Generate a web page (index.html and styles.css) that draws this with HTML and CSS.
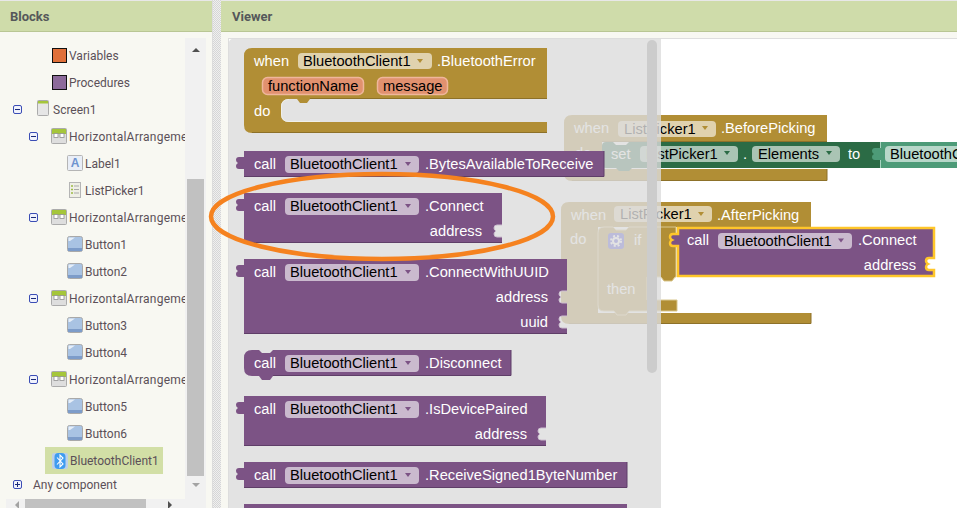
FILE: index.html
```html
<!DOCTYPE html>
<html lang="en">
<head>
    <meta charset="UTF-8">
    <title>Blocks Viewer</title>
    <link rel="stylesheet" href="styles.css">
</head>
<body>
    <svg class="icon-defs" width="0" height="0">
        <symbol id="ic-screen" viewBox="0 0 12 16">
            <rect x=".5" y=".5" width="11" height="15" rx="1" fill="#e6e6e6" stroke="#ababab"/>
            <rect x="1" y="1" width="10" height="2.5" fill="#a5c63b"/>
        </symbol>
        <symbol id="ic-arrangement" viewBox="0 0 16 16">
            <rect x=".5" y=".5" width="15" height="15" rx="1" fill="#dedede" stroke="#ababab"/>
            <rect x="1" y="1" width="14" height="5" fill="#a5c63b"/>
            <rect x="3" y="5.5" width="4" height="4" fill="#fff" stroke="#8f8f8f" stroke-width=".8"/>
            <rect x="9" y="5.5" width="4" height="4" fill="#fff" stroke="#8f8f8f" stroke-width=".8"/>
        </symbol>
        <symbol id="ic-button" viewBox="0 0 16 16">
            <rect x=".5" y=".5" width="15" height="15" rx="2" fill="#a9c3e3" stroke="#a9a9a9"/>
            <rect x="1" y="12" width="14" height="3" fill="#7d9cc9"/>
            <path d="M1.5 1.5H8L3 5H1.5Z" fill="#e6eef8"/>
        </symbol>
    </svg>

    <div class="page">
        <section class="blocks-panel">
            <h2 class="panel-title">Blocks</h2>
            <div class="tree-wrap">
                <ul class="tree">
                    <li class="row lvl-2"><span class="swatch swatch-var"></span><span class="label">Variables</span></li>
                    <li class="row lvl-2"><span class="swatch swatch-proc"></span><span class="label">Procedures</span></li>
                    <li class="row lvl-0"><span class="toggle minus"></span><svg class="ic-screen"><use href="#ic-screen"/></svg><span class="label">Screen1</span></li>
                    <li class="row lvl-1 row-wide"><span class="toggle minus"></span><svg class="ic"><use href="#ic-arrangement"/></svg><span class="label">HorizontalArrangement1</span></li>
                    <li class="row lvl-3">
                        <svg class="ic" viewBox="0 0 16 16"><rect x=".5" y=".5" width="15" height="15" rx="1" fill="#e9eef7" stroke="#b5b5b5"/><text class="ic-a" x="8" y="12" text-anchor="middle">A</text></svg>
                        <span class="label">Label1</span>
                    </li>
                    <li class="row lvl-3">
                        <svg class="ic" viewBox="0 0 16 16"><rect x="2.5" y=".5" width="11" height="15" fill="#efefe6" stroke="#b5b5b5"/><path d="M4 4h2M4 7.5h2M4 11h2" stroke="#9dbb45" stroke-width="1.5"/><path d="M7 4h5M7 7.5h5M7 11h5" stroke="#a9a9a9"/></svg>
                        <span class="label">ListPicker1</span>
                    </li>
                    <li class="row lvl-1 row-wide"><span class="toggle minus"></span><svg class="ic"><use href="#ic-arrangement"/></svg><span class="label">HorizontalArrangement2</span></li>
                    <li class="row lvl-3"><svg class="ic"><use href="#ic-button"/></svg><span class="label">Button1</span></li>
                    <li class="row lvl-3"><svg class="ic"><use href="#ic-button"/></svg><span class="label">Button2</span></li>
                    <li class="row lvl-1 row-wide"><span class="toggle minus"></span><svg class="ic"><use href="#ic-arrangement"/></svg><span class="label">HorizontalArrangement3</span></li>
                    <li class="row lvl-3"><svg class="ic"><use href="#ic-button"/></svg><span class="label">Button3</span></li>
                    <li class="row lvl-3"><svg class="ic"><use href="#ic-button"/></svg><span class="label">Button4</span></li>
                    <li class="row lvl-1 row-wide"><span class="toggle minus"></span><svg class="ic"><use href="#ic-arrangement"/></svg><span class="label">HorizontalArrangement4</span></li>
                    <li class="row lvl-3"><svg class="ic"><use href="#ic-button"/></svg><span class="label">Button5</span></li>
                    <li class="row lvl-3"><svg class="ic"><use href="#ic-button"/></svg><span class="label">Button6</span></li>
                    <li class="row lvl-2 selected">
                        <svg class="ic" viewBox="0 0 16 16"><rect width="16" height="16" rx="2" fill="#bcd0ea"/><rect x="2.5" y="0" width="11" height="16" rx="4" fill="#3f9cf0"/><path d="M5 4.5l6 6.5-3 3V2l3 3-6 6.5" fill="none" stroke="#fff" stroke-width="1.1"/></svg>
                        <span class="label">BluetoothClient1</span>
                    </li>
                    <li class="row lvl-0 row-any"><span class="toggle plus"></span><span class="label">Any component</span></li>
                </ul>
                <div class="vscroll">
                    <div class="vscroll-top"><span class="arrow-up"></span></div>
                    <div class="vscroll-thumb"></div>
                    <div class="vscroll-bottom"><span class="arrow-down"></span></div>
                </div>
                <div class="hscroll"><span class="arrow-left"></span><div class="hscroll-thumb"></div><span class="arrow-right"></span></div>
            </div>
        </section>

        <div class="splitter"></div>

        <section class="viewer-panel">
            <h2 class="panel-title">Viewer</h2>
            <svg class="workspace" viewBox="221 32 736 476">
                <rect class="canvas" x="228.5" y="38.5" width="740" height="480"/>

                <!-- blocks in the workspace, the flyout lies over their left part -->
                <path class="gold" d="M564 123Q564 115 572 115H827V142H602V169H827V181H572Q564 181 564 173Z"/>
                <path class="gold-low" d="M572 180.5H827V169M827 141.5H602"/>
                <text class="tx" x="574" y="133">when</text>
                <rect class="field" x="618" y="121" width="98" height="16" rx="4"/>
                <text class="tx-field" x="624" y="134">ListPicker1</text>
                <path class="arrow-gold" d="M702 126h6l-3 4z"/>
                <text class="tx" x="721" y="133">.BeforePicking</text>
                <text class="tx" x="575" y="158">do</text>

                <path class="green" d="M602 146Q602 142 606 142H613l3 3h10l3-3H880V168H632l-3 3h-10l-3-3H606Q602 168 602 164Z"/>
                <text class="tx" x="611" y="159">set</text>
                <rect class="field" x="640" y="146" width="98" height="16" rx="4"/>
                <text class="tx-field" x="646" y="159">ListPicker1</text>
                <path class="arrow-green" d="M724 151h6l-3 4z"/>
                <text class="tx" x="743" y="159">.</text>
                <rect class="field" x="752" y="146" width="88" height="16" rx="4"/>
                <text class="tx-field" x="758" y="159">Elements</text>
                <path class="arrow-green" d="M826 151h6l-3 4z"/>
                <text class="tx" x="848" y="159">to</text>
                <path class="green-light" d="M880 142H970V168H880V160h-5q-3 0-3-3q0-2 2-3q-2-1-2-3q0-3 3-3h5Z"/>
                <path class="green-edge" d="M880.5 142V148M880.5 160V168"/>
                <rect class="field" x="885" y="146" width="120" height="16" rx="4"/>
                <text class="tx-field" x="890" y="159">BluetoothClient1</text>

                <path class="gold" d="M561 210Q561 202 569 202H811V227H598V313H811V324H569Q561 324 561 316Z"/>
                <path class="gold-low" d="M569 323.5H811V313"/>
                <text class="tx" x="571" y="220">when</text>
                <rect class="field" x="614" y="206" width="98" height="16" rx="4"/>
                <text class="tx-field" x="620" y="219">ListPicker1</text>
                <path class="arrow-gold" d="M698 212h6l-3 4z"/>
                <text class="tx" x="717" y="220">.AfterPicking</text>
                <text class="tx" x="570" y="244">do</text>

                <path class="gold gold-lit" d="M598 233Q598 227 604 227H613l3 3h10l3-3H676V277H675l-3 4h-8l-3-4H647V300H677V311H629l-3 4h-9l-3-4H604Q598 311 598 305Z"/>
                <rect class="gear-box" x="608" y="233" width="16" height="16" rx="3"/>
                <circle class="gear-teeth" cx="616" cy="241" r="5"/>
                <circle class="gear" cx="616" cy="241" r="3"/>
                <text class="tx" x="634" y="245">if</text>
                <text class="tx" x="607" y="294">then</text>

                <!-- picked block -->
                <g transform="translate(678 228)">
                    <path class="picked" d="M0 0H256V30h-5q-3 0-3 3q0 2 2 3q-2 1-2 3q0 3 3 3h5V48H0V18h-5q-3 0-3-3q0-2 2-3q-2-1-2-3q0-3 3-3h5Z"/>
                    <text class="tx" x="9" y="17">call</text>
                    <rect class="field" x="40" y="5" width="134" height="16" rx="4"/>
                    <text class="tx-field" x="46" y="18">BluetoothClient1</text>
                    <path class="arrow-purple" d="M160 10.5h6l-3 4z"/>
                    <text class="tx" x="180" y="17">.Connect</text>
                    <text class="tx end" x="238" y="42">address</text>
                </g>

                <!-- flyout -->
                <path class="flyout" d="M228 46Q228 38 236 38H661V508H228Z"/>

                <path class="gold" d="M244 56Q244 48 252 48H547V99H310l-3 4h-7l-3-4H289Q281 99 281 107V114Q281 122 289 122H547V133H252Q244 133 244 125Z"/>
                <path class="gold-low" d="M252 132.5H547M547 98.5H310"/>
                <path class="inner-lit" d="M289 99.5Q281.5 99.5 281.5 107V114Q281.5 121.5 289 121.5H320"/>
                <text class="tx" x="254" y="66">when</text>
                <rect class="field" x="298" y="53" width="134" height="16" rx="4"/>
                <text class="tx-field" x="303" y="66">BluetoothClient1</text>
                <path class="arrow-gold" d="M417 59h6l-3 4z"/>
                <text class="tx" x="437" y="66">.BluetoothError</text>
                <rect class="chip" x="262.5" y="77.5" width="101" height="17" rx="5"/>
                <text class="tx-field" x="268" y="91">functionName</text>
                <rect class="chip" x="377.5" y="77.5" width="70" height="17" rx="5"/>
                <text class="tx-field" x="383" y="91">message</text>
                <text class="tx" x="254" y="116">do</text>

                <g transform="translate(244 151)">
                    <path class="purple" d="M0 0H360V26H0V18h-5q-3 0-3-3q0-2 2-3q-2-1-2-3q0-3 3-3h5Z"/>
                    <path class="purple-low" d="M0 25.5H360V0"/>
                    <text class="tx" x="10" y="18">call</text>
                    <rect class="field" x="41" y="5" width="134" height="17" rx="4"/>
                    <text class="tx-field" x="46" y="18">BluetoothClient1</text>
                    <path class="arrow-purple" d="M161 11h6l-3 4z"/>
                    <text class="tx" x="181" y="18">.BytesAvailableToReceive</text>
                </g>

                <g transform="translate(244 193)">
                    <path class="purple" d="M0 0H258V32h-5q-3 0-3 3q0 2 2 3q-2 1-2 3q0 3 3 3h5V50H0V18h-5q-3 0-3-3q0-2 2-3q-2-1-2-3q0-3 3-3h5Z"/>
                    <path class="purple-low" d="M0 49.5H258"/>
                    <path class="socket-lit" d="M258 32h-5q-3 0-3 3q0 2 2 3q-2 1-2 3q0 3 3 3h5"/>
                    <text class="tx" x="10" y="18">call</text>
                    <rect class="field" x="41" y="5" width="134" height="17" rx="4"/>
                    <text class="tx-field" x="46" y="18">BluetoothClient1</text>
                    <path class="arrow-purple" d="M161 11h6l-3 4z"/>
                    <text class="tx" x="181" y="18">.Connect</text>
                    <text class="tx end" x="238" y="43">address</text>
                </g>

                <g transform="translate(244 259)">
                    <path class="purple" d="M0 0H323V32h-5q-3 0-3 3q0 2 2 3q-2 1-2 3q0 3 3 3h5V57h-5q-3 0-3 3q0 2 2 3q-2 1-2 3q0 3 3 3h5V75H0V18h-5q-3 0-3-3q0-2 2-3q-2-1-2-3q0-3 3-3h5Z"/>
                    <path class="purple-low" d="M0 74.5H323"/>
                    <path class="socket-lit" d="M323 32h-5q-3 0-3 3q0 2 2 3q-2 1-2 3q0 3 3 3h5M323 57h-5q-3 0-3 3q0 2 2 3q-2 1-2 3q0 3 3 3h5"/>
                    <text class="tx" x="10" y="18">call</text>
                    <rect class="field" x="41" y="5" width="134" height="17" rx="4"/>
                    <text class="tx-field" x="46" y="18">BluetoothClient1</text>
                    <path class="arrow-purple" d="M161 11h6l-3 4z"/>
                    <text class="tx" x="181" y="18">.ConnectWithUUID</text>
                    <text class="tx end" x="304" y="43">address</text>
                    <text class="tx end" x="304" y="68">uuid</text>
                </g>

                <g transform="translate(244 350)">
                    <path class="purple" d="M0 8Q0 0 8 0H15l3 3h8l3-3H267V26H29l-3 4h-8l-3-4H8Q0 26 0 18Z"/>
                    <path class="purple-low" d="M29 25.5H267V0"/>
                    <text class="tx" x="10" y="18">call</text>
                    <rect class="field" x="41" y="5" width="134" height="17" rx="4"/>
                    <text class="tx-field" x="46" y="18">BluetoothClient1</text>
                    <path class="arrow-purple" d="M161 11h6l-3 4z"/>
                    <text class="tx" x="181" y="18">.Disconnect</text>
                </g>

                <g transform="translate(244 396)">
                    <path class="purple" d="M0 0H302V32h-5q-3 0-3 3q0 2 2 3q-2 1-2 3q0 3 3 3h5V50H0V18h-5q-3 0-3-3q0-2 2-3q-2-1-2-3q0-3 3-3h5Z"/>
                    <path class="purple-low" d="M0 49.5H302"/>
                    <path class="socket-lit" d="M302 32h-5q-3 0-3 3q0 2 2 3q-2 1-2 3q0 3 3 3h5"/>
                    <text class="tx" x="10" y="18">call</text>
                    <rect class="field" x="41" y="5" width="134" height="17" rx="4"/>
                    <text class="tx-field" x="46" y="18">BluetoothClient1</text>
                    <path class="arrow-purple" d="M161 11h6l-3 4z"/>
                    <text class="tx" x="181" y="18">.IsDevicePaired</text>
                    <text class="tx end" x="283" y="43">address</text>
                </g>

                <g transform="translate(244 462)">
                    <path class="purple" d="M0 0H383V26H0V18h-5q-3 0-3-3q0-2 2-3q-2-1-2-3q0-3 3-3h5Z"/>
                    <path class="purple-low" d="M0 25.5H383V0"/>
                    <text class="tx" x="10" y="18">call</text>
                    <rect class="field" x="41" y="5" width="134" height="17" rx="4"/>
                    <text class="tx-field" x="46" y="18">BluetoothClient1</text>
                    <path class="arrow-purple" d="M161 11h6l-3 4z"/>
                    <text class="tx" x="181" y="18">.ReceiveSigned1ByteNumber</text>
                </g>

                <rect class="purple" x="244" y="504" width="383" height="10"/>

                <rect class="flyout-scroll" x="647" y="40" width="10" height="333" rx="5"/>
            </svg>
        </section>

        <!-- hand drawn mark over the screenshot -->
        <svg class="callout" viewBox="0 0 957 508"><ellipse cx="382" cy="216.5" rx="171" ry="42.5"/></svg>
    </div>
</body>
</html>
```
FILE: styles.css
```css
* {
    box-sizing: border-box;
    padding: 0;
    margin: 0;
}
body {
    font-family: Roboto, sans-serif;
    background: #f8f8f2;
}
.icon-defs {
    position: absolute;
}
.page {
    position: relative;
    display: flex;
    height: 508px;
    overflow: hidden;
}
.blocks-panel {
    display: flex;
    flex-direction: column;
    width: 212px;
}
.viewer-panel {
    display: flex;
    flex-direction: column;
    flex: 1;
    min-width: 0;
}
.splitter {
    width: 9px;
    border-left: 1px solid #dcdcdc;
    background: repeating-conic-gradient(#d6d6d6 0 25%, #efefef 0 50%) 0 0/2px 2px;
}
.panel-title {
    flex: none;
    height: 32px;
    padding: 8px 0 0 10px;
    border-top: 1px solid #e8e8e8;
    border-bottom: 1px solid #b9c694;
    background: #cfdcaa;
    color: #55585a;
    font-size: 13px;
    font-weight: 700;
}
.viewer-panel .panel-title {
    padding-left: 11px;
}

/* component tree */
.tree-wrap {
    flex: 1;
    display: grid;
    grid-template-columns: 185px 21px;
    grid-template-rows: 1fr 9px;
    min-height: 0;
    padding-top: 6px;
}
.tree {
    list-style: none;
    padding-top: 4px;
    overflow: hidden;
    min-height: 0;
}
.row {
    display: flex;
    align-items: center;
    height: 27px;
    white-space: nowrap;
    color: #5b5058;
    font-size: 12px;
}
.row-wide .label {
    letter-spacing: 0.25px;
}
.row-any {
    height: 21px;
}
.lvl-0 {
    padding-left: 13px;
}
.lvl-1 {
    padding-left: 29px;
}
.lvl-2 {
    padding-left: 52px;
}
.lvl-3 {
    padding-left: 67px;
}
.selected {
    width: 118px;
    margin-left: 45px;
    padding-left: 7px;
    background: #d2dfa6;
}
.label {
    margin-left: 2px;
}
.toggle {
    position: relative;
    flex: none;
    width: 9px;
    height: 9px;
    margin-right: 13px;
    border: 1px solid #3b4db5;
    border-radius: 2px;
    background: #f0f2fc;
}
.toggle::before {
    content: "";
    position: absolute;
    left: 1px;
    top: 3px;
    width: 5px;
    height: 1px;
    background: #1a2a7a;
}
.plus::after {
    content: "";
    position: absolute;
    left: 3px;
    top: 1px;
    width: 1px;
    height: 5px;
    background: #1a2a7a;
}
.lvl-0 .plus {
    margin-right: 9px;
}
.swatch {
    flex: none;
    width: 15px;
    height: 15px;
    border: 1px solid #111;
}
.swatch-var {
    background: #e0703a;
}
.swatch-proc {
    background: #8c6a9a;
}
.ic {
    flex: none;
    width: 16px;
    height: 16px;
}
.ic-screen {
    flex: none;
    width: 12px;
    height: 16px;
    margin: 0 2px 4px 2px;
}
.lvl-1 .ic, .lvl-3 .ic {
    margin-bottom: 2px;
}
.ic-a {
    fill: #6d93cf;
    font: 700 12px "Liberation Sans", sans-serif;
}

/* panel scrollbars */
.vscroll {
    grid-row: 1 / 3;
    grid-column: 2;
    display: flex;
    flex-direction: column;
    background: #f1f1f1;
}
.vscroll-top {
    display: flex;
    justify-content: center;
    height: 141px;
    padding-top: 10px;
}
.vscroll-thumb {
    height: 297px;
    margin: 0 2px;
    background: #c1c1c1;
}
.vscroll-bottom {
    display: flex;
    justify-content: center;
    padding-top: 7px;
}
.arrow-up {
    width: 0;
    height: 0;
    border: 4px solid transparent;
    border-top: 0;
    border-bottom: 4px solid #505050;
}
.arrow-down {
    width: 0;
    height: 0;
    border: 4px solid transparent;
    border-bottom: 0;
    border-top: 4px solid #a3a3a3;
}
.hscroll {
    display: flex;
    align-items: flex-start;
    margin-left: 6px;
    background: #f1f1f1;
}
.hscroll-thumb {
    width: 121px;
    height: 9px;
    margin: 0 22px 0 6px;
    background: #c1c1c1;
}
.arrow-left {
    width: 0;
    height: 0;
    margin: 2px 0 0 9px;
    border: 4px solid transparent;
    border-left: 0;
    border-right: 4px solid #a3a3a3;
}
.arrow-right {
    width: 0;
    height: 0;
    margin-top: 2px;
    border: 4px solid transparent;
    border-right: 0;
    border-left: 4px solid #505050;
}

/* blocks */
.workspace {
    display: block;
    width: 736px;
    height: 476px;
}
.canvas {
    fill: #fff;
    stroke: #dedede;
}
.flyout {
    fill: #dcdcdc;
    opacity: 0.8;
}
.flyout-scroll {
    fill: #ccc;
}
.tx, .tx-field {
    font-family: "Liberation Sans", sans-serif;
    font-size: 14.67px;
}
.tx {
    fill: #fff;
}
.tx-field {
    fill: #000;
}
.end {
    text-anchor: end;
}
.field {
    fill: #fff;
    fill-opacity: 0.6;
}
.gold {
    fill: #b18e35;
}
.gold-low {
    fill: none;
    stroke: #8d7129;
}
.gold-lit {
    stroke: #d9c78f;
}
.inner-lit {
    fill: none;
    stroke: #f0f0ea;
}
.green {
    fill: #2b6b45;
}
.green-light {
    fill: #4d9b78;
}
.green-edge {
    fill: none;
    stroke: #a6d3bf;
}
.purple {
    fill: #7c5385;
}
.purple-low {
    fill: none;
    stroke: #5f3e68;
}
.socket-lit {
    fill: none;
    stroke: #cdbfd0;
}
.picked {
    fill: #7c5385;
    stroke: #ffc62a;
    stroke-width: 2.5;
}
.arrow-gold {
    fill: #b18e35;
}
.arrow-green {
    fill: #2b6b45;
}
.arrow-purple {
    fill: #7c5385;
}
.chip {
    fill: #e1916f;
    stroke: #efb69b;
    stroke-width: 1.5;
}
.gear-box {
    fill: #3c3cd2;
}
.gear {
    fill: none;
    stroke: #fff;
    stroke-width: 2;
}
.gear-teeth {
    fill: none;
    stroke: #fff;
    stroke-width: 2;
    stroke-dasharray: 2 2;
}

.callout {
    position: absolute;
    top: 0;
    left: 0;
    width: 957px;
    height: 508px;
    pointer-events: none;
}
.callout ellipse {
    fill: none;
    stroke: #f5821f;
    stroke-width: 4.5;
}
```
